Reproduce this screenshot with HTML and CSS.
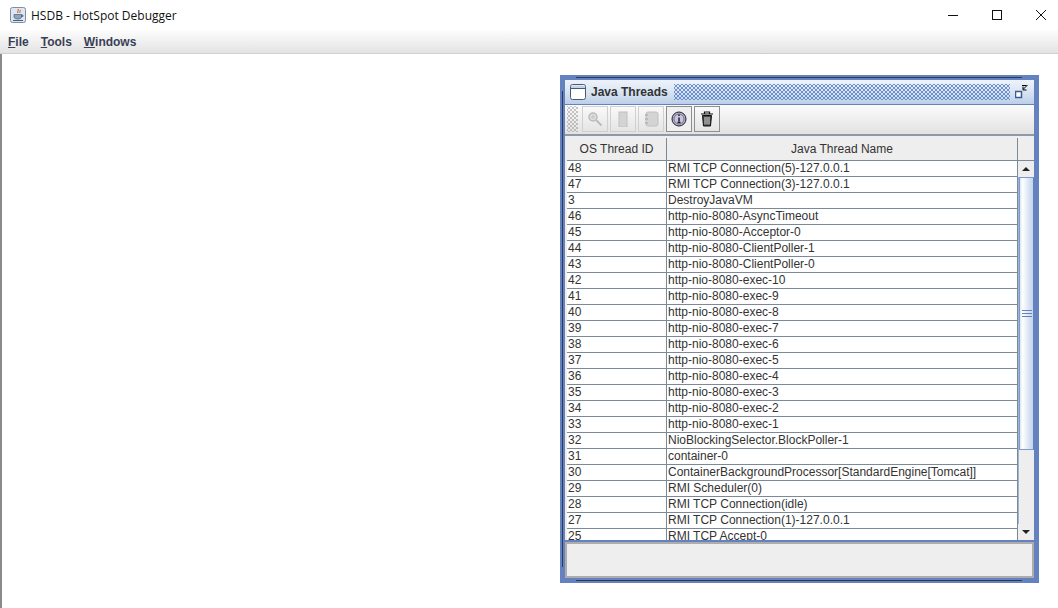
FILE: index.html
```html
<!DOCTYPE html>
<html lang="en">
  <head>
    <meta charset="UTF-8" />
    <title>HSDB - HotSpot Debugger</title>
    <link rel="stylesheet" href="styles.css">
  </head>
  <body>
    <div class="titlebar">
      <svg class="app-icon" width="16" height="16" viewBox="0 0 16 16">
        <rect x="0.5" y="0.5" width="15" height="15" rx="2" fill="#dfe6ef" stroke="#7d8ea6" />
        <path d="M8 2c1.5 1.5-1.5 2.5 0 4M10 3c1 1-1 2 0 3" fill="none" stroke="#c8552b" />
        <path d="M4 7.5h7.5v2.5c0 1.5-1.5 2-3.5 2s-4-.5-4-2zM11.500 8h1.500v1.500h-1.500" fill="#8fa3bd" stroke="#47607f" stroke-width="0.7" />
        <path d="M3 13.500h10" stroke="#47607f" />
      </svg>
      <span class="app-title">HSDB - HotSpot Debugger</span>
      <div class="win-btns">
        <svg width="10" height="10" viewBox="0 0 10 10"><path d="M0 5.500h10" stroke="#111" /></svg>
        <svg width="10" height="10" viewBox="0 0 10 10"><rect x="0.500" y="0.500" width="9" height="9" fill="none" stroke="#111" /></svg>
        <svg width="10" height="10" viewBox="0 0 10 10"><path d="M0 0l10 10M10 0L0 10" stroke="#111" /></svg>
      </div>
    </div>
    <div class="menubar">
      <span class="menu"><u>F</u>ile</span>
      <span class="menu"><u>T</u>ools</span>
      <span class="menu"><u>W</u>indows</span>
    </div>

    <div class="desktop">
      <div class="frame">
        <div class="frame-title">
          <svg class="frame-icon" width="16" height="16" viewBox="0 0 16 16">
            <rect x="0.500" y="0.500" width="15" height="15" rx="2" fill="#fff" stroke="#4a5a70" />
            <path d="M1 1.500h14v3h-14z" fill="#c3d3e8" />
            <path d="M1 4.500h14" stroke="#4a5a70" />
          </svg>
          <span class="frame-name">Java Threads</span>
          <div class="dots"></div>
          <div class="frame-ctl">
            <svg width="14" height="14" viewBox="0 0 14 14">
              <path d="M7 1.500h4.500M12.500 1L8.500 5M8 2.500v3.500h3.500" fill="none" stroke="#000" transform="translate(0 -1)" />
              <rect x="0.500" y="6.500" width="6" height="6" fill="#fff" stroke="#3d5a98" stroke-width="1.500" />
            </svg>
          </div>
        </div>

        <div class="toolbar">
          <div class="grip"></div>
          <div class="tool off">
            <svg width="16" height="16" viewBox="0 0 16 16">
              <circle cx="6" cy="6" r="4" fill="#ddd" stroke="#bbb" stroke-width="1.500" />
              <path d="M9 9l5.500 5.500" stroke="#bbb" stroke-width="2" />
              <path d="M4 6h4M6 4v4" stroke="#c4c4c4" />
            </svg>
          </div>
          <div class="tool off">
            <svg width="16" height="16" viewBox="0 0 16 16">
              <rect x="4" y="1" width="8" height="15" fill="#d4d4d4" stroke="#c0c0c0" />
            </svg>
          </div>
          <div class="tool off">
            <svg width="16" height="16" viewBox="0 0 16 16">
              <rect x="3" y="1" width="12" height="14" rx="2" fill="#d4d4d4" stroke="#c0c0c0" />
              <path d="M2 4h3M2 8h3M2 12h3" stroke="#bbb" stroke-width="2" />
            </svg>
          </div>
          <div class="tool on">
            <svg width="16" height="16" viewBox="0 0 16 16">
              <circle cx="8" cy="8" r="7" fill="#b5b0cf" stroke="#222" />
              <circle cx="8" cy="8" r="5" fill="#c9c5dd" stroke="#56527a" stroke-width="0.700" />
              <path d="M8 3.500v1.500" stroke="#222" stroke-width="1.500" />
              <path d="M8 6.500v4M6.500 11.500h3" stroke="#222" stroke-width="1.500" />
            </svg>
          </div>
          <div class="tool">
            <svg width="16" height="16" viewBox="0 0 16 16">
              <path d="M5.500 2.500v-1.500h5v1.500M2 3h12" fill="none" stroke="#111" stroke-width="1.200" />
              <path d="M3.500 4.500h9l-1 10.500h-7z" fill="#444" stroke="#111" />
              <path d="M6 6v7.500M8 6v7.500M10 6v7.500" stroke="#ddd" />
            </svg>
          </div>
        </div>

        <div class="table-wrap">
          <div class="table-view">
            <div class="head">
              <div class="head-cell first">OS Thread ID</div>
              <div class="head-cell">Java Thread Name</div>
            </div>
            <div class="rows">
              <div class="row"><div class="id">48</div><div class="name">RMI TCP Connection(5)-127.0.0.1</div></div>
              <div class="row"><div class="id">47</div><div class="name">RMI TCP Connection(3)-127.0.0.1</div></div>
              <div class="row"><div class="id">3</div><div class="name">DestroyJavaVM</div></div>
              <div class="row"><div class="id">46</div><div class="name">http-nio-8080-AsyncTimeout</div></div>
              <div class="row"><div class="id">45</div><div class="name">http-nio-8080-Acceptor-0</div></div>
              <div class="row"><div class="id">44</div><div class="name">http-nio-8080-ClientPoller-1</div></div>
              <div class="row"><div class="id">43</div><div class="name">http-nio-8080-ClientPoller-0</div></div>
              <div class="row"><div class="id">42</div><div class="name">http-nio-8080-exec-10</div></div>
              <div class="row"><div class="id">41</div><div class="name">http-nio-8080-exec-9</div></div>
              <div class="row"><div class="id">40</div><div class="name">http-nio-8080-exec-8</div></div>
              <div class="row"><div class="id">39</div><div class="name">http-nio-8080-exec-7</div></div>
              <div class="row"><div class="id">38</div><div class="name">http-nio-8080-exec-6</div></div>
              <div class="row"><div class="id">37</div><div class="name">http-nio-8080-exec-5</div></div>
              <div class="row"><div class="id">36</div><div class="name">http-nio-8080-exec-4</div></div>
              <div class="row"><div class="id">35</div><div class="name">http-nio-8080-exec-3</div></div>
              <div class="row"><div class="id">34</div><div class="name">http-nio-8080-exec-2</div></div>
              <div class="row"><div class="id">33</div><div class="name">http-nio-8080-exec-1</div></div>
              <div class="row"><div class="id">32</div><div class="name">NioBlockingSelector.BlockPoller-1</div></div>
              <div class="row"><div class="id">31</div><div class="name">container-0</div></div>
              <div class="row"><div class="id">30</div><div class="name">ContainerBackgroundProcessor[StandardEngine[Tomcat]]</div></div>
              <div class="row"><div class="id">29</div><div class="name">RMI Scheduler(0)</div></div>
              <div class="row"><div class="id">28</div><div class="name">RMI TCP Connection(idle)</div></div>
              <div class="row"><div class="id">27</div><div class="name">RMI TCP Connection(1)-127.0.0.1</div></div>
              <div class="row"><div class="id">25</div><div class="name">RMI TCP Accept-0</div></div>
            </div>
          </div>
          <div class="scrollbar">
            <div class="corner"></div>
            <div class="arrow up"></div>
            <div class="track">
              <div class="thumb"><span class="thumb-grip"></span></div>
            </div>
            <div class="arrow down"></div>
          </div>
        </div>

        <div class="status"></div>
      </div>
    </div>
  </body>
</html>
```

FILE: styles.css
```css
html, body {
  margin: 0;
  height: 100%;
}
body {
  background: #fff;
  font-family: "Liberation Sans", Arial, sans-serif;
  font-size: 12px;
  color: #333;
  overflow: hidden;
}

.titlebar {
  display: flex;
  align-items: center;
  height: 30px;
  padding-left: 10px;
}
.app-icon {
  margin-right: 5px;
}
.app-title {
  font-family: "Open Sans", sans-serif;
  font-size: 12px;
  color: #111;
}
.win-btns {
  margin-left: auto;
  display: flex;
  gap: 34px;
  padding-right: 12px;
}

.menubar {
  display: flex;
  align-items: center;
  gap: 12px;
  height: 24px;
  padding-left: 8px;
  box-sizing: border-box;
  background: linear-gradient(to bottom, #fdfdfd 0%, #e3e3e3 100%);
  border-bottom: 1px solid #d0d0d0;
  font-weight: bold;
  color: #3a3f55;
}

.desktop {
  position: relative;
  height: 554px;
  border-left: 2px solid #8a8a8a;
  box-sizing: border-box;
}

.frame {
  position: absolute;
  left: 558px;
  top: 21px;
  width: 479px;
  height: 508px;
  box-sizing: border-box;
  padding: 5px 5px 5px 5px;
  background: #6382bf;
  display: flex;
  flex-direction: column;
}
/* dark line running inside the blue border */
.frame::before {
  content: "";
  position: absolute;
  left: 2px;
  right: 3px;
  top: 2px;
  bottom: 2px;
  border: solid #2c3a55;
  border-width: 1px;
  clip-path: polygon(14px 0, calc(100% - 14px) 0, calc(100% - 14px) 2px, 2px 2px, 2px 14px, 0 14px, 0 calc(100% - 14px), 2px calc(100% - 14px), 2px calc(100% - 2px), calc(100% - 14px) calc(100% - 2px), calc(100% - 14px) 100%, 14px 100%);
}

.frame-title {
  display: flex;
  align-items: center;
  height: 25px;
  flex-shrink: 0;
  padding-left: 5px;
  box-sizing: border-box;
  background: linear-gradient(to bottom, #eef3fa 0%, #dbe6f4 45%, #bccfe8 100%);
  border-bottom: 1px solid #6382bf;
}
.frame-icon {
  margin-right: 5px;
}
.frame-name {
  font-weight: bold;
  color: #333;
  margin-right: 6px;
}
.dots {
  flex: 1;
  height: 16px;
  background-image: radial-gradient(#6a90d0 0.8px, transparent 1px), radial-gradient(#6a90d0 0.8px, transparent 1px);
  background-size: 4px 4px;
  background-position: 0 0, 2px 2px;
}
.frame-ctl {
  width: 24px;
  display: flex;
  align-items: center;
  justify-content: center;
}

.toolbar {
  display: flex;
  align-items: center;
  height: 31px;
  flex-shrink: 0;
  box-sizing: border-box;
  padding: 0 0 1px 2px;
  gap: 2px;
  background: linear-gradient(to bottom, #fbfbfb 0%, #e2e2e2 100%);
  border-bottom: 2px solid #8d99a8;
}
.grip {
  width: 11px;
  height: 26px;
  margin-right: 2px;
  background-image: radial-gradient(#888 0.6px, transparent 0.8px), radial-gradient(#888 0.6px, transparent 0.8px);
  background-size: 4px 4px;
  background-position: 0 0, 2px 2px;
}
.tool {
  width: 26px;
  height: 26px;
  box-sizing: border-box;
  border: 1px solid #8e8e8e;
  display: flex;
  align-items: center;
  justify-content: center;
}
.tool.off {
  border-color: #d0d0d0;
}
.tool.on {
  background: #f0f0f0;
}

.table-wrap {
  flex: 1;
  display: flex;
  min-height: 0;
  padding-left: 2px;
  padding-top: 2px;
  background: #eee;
}
.table-view {
  flex: 1;
  min-width: 0;
  overflow: hidden;
  background: #fff;
}
.head {
  display: flex;
  height: 23px;
  box-sizing: border-box;
  background: #eee;
  border-bottom: 1px solid #7a8a99;
}
.head-cell {
  flex: 1;
  line-height: 22px;
  text-align: center;
}
.head-cell.first,
.id {
  flex: none;
  width: 100px;
  box-sizing: border-box;
  border-right: 1px solid #7a8a99;
}
.row {
  display: flex;
  height: 16px;
  box-sizing: border-box;
  border-bottom: 1px solid #7a8a99;
  line-height: 15px;
  color: #333;
}
.id,
.name {
  padding-left: 1px;
}

.scrollbar {
  width: 17px;
  flex-shrink: 0;
  display: flex;
  flex-direction: column;
  box-sizing: border-box;
  border-left: 1px solid #7a8a99;
}
.corner {
  height: 23px;
  flex-shrink: 0;
  background: #eee;
  border-bottom: 1px solid #7a8a99;
  box-sizing: border-box;
}
.arrow {
  height: 16px;
  flex-shrink: 0;
  background: #eee;
  display: flex;
  align-items: center;
  justify-content: center;
}
.arrow::after {
  content: "";
  border-left: 4px solid transparent;
  border-right: 4px solid transparent;
}
.arrow.up::after {
  border-bottom: 4px solid #222;
}
.arrow.down::after {
  border-top: 4px solid #222;
}
.track {
  flex: 1;
  background: #eee;
  border-left: 1px solid #9fb4d4;
}
.thumb {
  height: 273px;
  display: flex;
  align-items: center;
  justify-content: center;
  box-sizing: border-box;
  border: 1px solid #7f9ac8;
  border-right-color: #6382bf;
  background: linear-gradient(to right, #dbe6f4 0%, #fff 20%, #dbe6f4 65%, #c3d4ea 100%);
}
.thumb-grip {
  width: 10px;
  height: 5px;
  border-top: 1px solid #6382bf;
  border-bottom: 1px solid #6382bf;
  position: relative;
}
.thumb-grip::after {
  content: "";
  position: absolute;
  left: 0;
  right: 0;
  top: 2px;
  border-top: 1px solid #6382bf;
}

.status {
  height: 36px;
  flex-shrink: 0;
  margin-top: 2px;
  background: #eee;
  border: 2px solid #adadad;
  box-sizing: border-box;
}
```
